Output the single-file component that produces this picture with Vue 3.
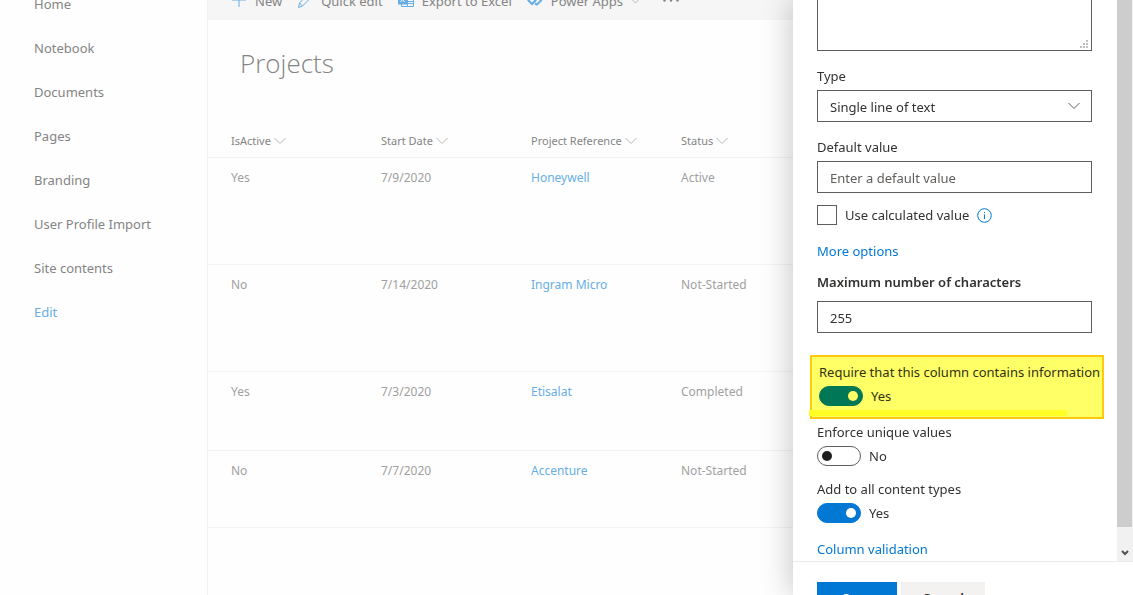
<script setup>
import { ref } from 'vue'

const navLinks = [
  'Home',
  'Notebook',
  'Documents',
  'Pages',
  'Branding',
  'User Profile Import',
  'Site contents'
]

const columns = ['IsActive', 'Start Date', 'Project Reference', 'Status']

const projects = [
  { active: 'Yes', start: '7/9/2020', reference: 'Honeywell', status: 'Active', size: 'tall' },
  { active: 'No', start: '7/14/2020', reference: 'Ingram Micro', status: 'Not-Started', size: 'tall' },
  { active: 'Yes', start: '7/3/2020', reference: 'Etisalat', status: 'Completed', size: 'medium' },
  { active: 'No', start: '7/7/2020', reference: 'Accenture', status: 'Not-Started', size: 'short' }
]

const description = ref('')
const defaultValue = ref('')
const calculated = ref(false)
const maxLength = ref('255')
const required = ref(true)
const unique = ref(false)
const allTypes = ref(true)
</script>

<template>
  <div class="page">
    <nav class="sidebar">
      <a v-for="link in navLinks" :key="link" href="#">{{ link }}</a>
      <a href="#" class="edit">Edit</a>
    </nav>

    <main class="content">
      <div class="command-bar">
        <button>
          <svg width="16" height="16" viewBox="0 0 16 16"><path d="M8 0v14M1 7h14" /></svg>
          New
        </button>
        <button>
          <svg width="16" height="16" viewBox="0 0 16 16">
            <path d="M1.5 14.5l1-4.5L11.5 1l3 3-9 9zM2.5 10l3 3M10 2.5l3 3" />
          </svg>
          Quick edit
        </button>
        <button>
          <svg width="16" height="16" viewBox="0 0 16 16">
            <path d="M8 1.5h7.5v12h-12V11M8 5h7.5M8 8.5h7.5M3.5 10.5h12M9.5 1.5v12" />
            <path class="solid" d="M0 2h9v9H0z" />
            <path class="cut" d="M2.5 4l4 5M6.5 4l-4 5" />
          </svg>
          Export to Excel
        </button>
        <button>
          <svg width="16" height="16" viewBox="0 0 16 16">
            <path class="thick" d="M1.5 7.5L5 4l3.5 3.5L5 11zM8 10.5l2 1 4-4L10.5 4 8 5.5" />
          </svg>
          Power Apps
          <svg class="chevron" width="9" height="9" viewBox="0 0 12 12"><path d="M1 3l5 5 5-5" /></svg>
        </button>
        <button class="more" aria-label="More">
          <svg width="16" height="16" viewBox="0 0 16 16">
            <circle cx="1.5" cy="7.5" r="1.2" /><circle cx="8" cy="7.5" r="1.2" /><circle cx="14.5" cy="7.5" r="1.2" />
          </svg>
        </button>
      </div>

      <h1>Projects</h1>

      <table>
        <thead>
          <tr>
            <th v-for="column in columns" :key="column">
              {{ column }}
              <svg class="chevron" width="12" height="12" viewBox="0 0 12 12"><path d="M0.5 3L6 8.5 11.5 3" /></svg>
            </th>
          </tr>
        </thead>
        <tbody>
          <tr v-for="project in projects" :key="project.reference" :class="project.size">
            <td>{{ project.active }}</td>
            <td>{{ project.start }}</td>
            <td><a href="#">{{ project.reference }}</a></td>
            <td>{{ project.status }}</td>
          </tr>
        </tbody>
      </table>
    </main>

    <aside class="panel">
      <div class="panel-body">
        <form class="fields" @submit.prevent>
          <div class="control description">
            <textarea v-model="description" aria-label="Description"></textarea>
            <svg class="grip" width="8" height="8" viewBox="0 0 8 8">
              <path d="M6 0h2v2H6zM3 3h2v2H3zM6 3h2v2H6zM0 6h2v2H0zM3 6h2v2H3zM6 6h2v2H6z" />
            </svg>
          </div>

          <label class="label" for="type">Type</label>
          <div class="control">
            <select id="type">
              <option>Single line of text</option>
            </select>
            <svg class="arrow" width="12" height="12" viewBox="0 0 12 12"><path d="M0.5 3L6 8.5 11.5 3" /></svg>
          </div>

          <label class="label" for="default">Default value</label>
          <input id="default" v-model="defaultValue" class="text-box" type="text" placeholder="Enter a default value">

          <div class="check-row">
            <input id="calculated" v-model="calculated" class="check" type="checkbox">
            <label for="calculated">Use calculated value</label>
            <svg class="info" width="15" height="15" viewBox="0 0 15 15">
              <circle cx="7.5" cy="7.5" r="6.8" /><path d="M7.5 6.5v4.5M7.5 4v1.2" />
            </svg>
          </div>

          <a href="#" class="more-options">More options</a>

          <label class="label strong" for="max">Maximum number of characters</label>
          <input id="max" v-model="maxLength" class="text-box" type="text">

          <div class="toggle-field highlight">
            <label for="required">Require that this column contains information</label>
            <div class="toggle-row">
              <input id="required" v-model="required" class="toggle green" type="checkbox" role="switch">
              <span>{{ required ? 'Yes' : 'No' }}</span>
            </div>
          </div>

          <div class="toggle-field">
            <label for="unique">Enforce unique values</label>
            <div class="toggle-row">
              <input id="unique" v-model="unique" class="toggle" type="checkbox" role="switch">
              <span>{{ unique ? 'Yes' : 'No' }}</span>
            </div>
          </div>

          <div class="toggle-field">
            <label for="all-types">Add to all content types</label>
            <div class="toggle-row">
              <input id="all-types" v-model="allTypes" class="toggle" type="checkbox" role="switch">
              <span>{{ allTypes ? 'Yes' : 'No' }}</span>
            </div>
          </div>

          <a href="#" class="validation">Column validation</a>
        </form>

        <div class="scrollbar">
          <div class="thumb"></div>
          <button class="scroll-down" aria-label="Scroll down">
            <svg width="8" height="8" viewBox="0 0 8 8"><path d="M1 2l3 3 3-3" /></svg>
          </button>
        </div>
      </div>

      <footer class="panel-footer">
        <button class="save-btn">Save</button>
        <button class="cancel-btn">Cancel</button>
      </footer>
    </aside>
  </div>
</template>

<style>
body {
  margin: 0;
  overflow: hidden;
}
</style>

<style scoped>
* {
  box-sizing: border-box;
}

.page {
  display: flex;
  height: 100vh;
  overflow: hidden;
  background: #fefefe;
  color: #323130;
  font-family: "Segoe UI", "Noto Sans", sans-serif;
  font-size: 13px;
  line-height: 20px;
}

a {
  color: #0078d4;
  text-decoration: none;
}

button,
input,
select,
textarea {
  margin: 0;
  font: inherit;
  color: inherit;
}

svg {
  flex: none;
  fill: none;
  stroke: currentColor;
}

/* left navigation, scrolled a little past its top */
.sidebar {
  flex: none;
  width: 208px;
  margin-top: -18px;
  padding-left: 34px;
  border-right: 1px solid #f1f1f1;
}

.sidebar a {
  display: block;
  line-height: 44px;
  color: #848484;
}

.sidebar a.edit {
  color: #66aee5;
}

.content {
  flex: 1;
  min-width: 0;
}

.command-bar {
  display: flex;
  align-items: center;
  gap: 15px;
  height: 38px;
  margin-top: -18px;
  padding-left: 23px;
  background: #f6f6f6;
}

.command-bar button {
  display: flex;
  align-items: center;
  gap: 8px;
  padding: 0;
  border: none;
  background: none;
  color: #848484;
  white-space: nowrap;
}

.command-bar svg {
  color: #66aee5;
}

.command-bar .solid {
  fill: #66aee5;
}

.command-bar .cut {
  stroke: #f6f6f6;
}

.command-bar .thick {
  stroke-width: 2;
}

.command-bar .chevron {
  color: #a6a6a6;
}

.command-bar .more {
  margin-left: 8px;
}

.command-bar .more svg {
  color: #848484;
  fill: currentColor;
  stroke: none;
}

h1 {
  margin: 23px 32px 0;
  color: #848484;
  font-family: "Segoe UI", "Open Sans", sans-serif;
  font-size: 26px;
  font-weight: 300;
  line-height: 40px;
}

table {
  width: 100%;
  margin-top: 41px;
  border-collapse: collapse;
  table-layout: fixed;
  font-size: 12px;
}

th,
td {
  width: 150px;
  padding: 10px 0 0 23px;
  border-bottom: 1px solid #f3f3f3;
  text-align: left;
  vertical-align: top;
  color: #a0a0a0;
}

th {
  height: 33px;
  padding-top: 7px;
  color: #848484;
  font-size: 11px;
  font-weight: 400;
}

th:last-child,
td:last-child {
  width: auto;
}

th .chevron {
  color: #b8b8b8;
  vertical-align: -2px;
}

td a {
  color: #66aee5;
}

.tall td {
  height: 107px;
}

.medium td {
  height: 79px;
}

.short td {
  height: 77px;
}

/* column settings panel */
.panel {
  position: fixed;
  top: 0;
  right: 0;
  bottom: 0;
  display: flex;
  flex-direction: column;
  width: 340px;
  background: white;
  box-shadow: 0 0 30px rgba(0, 0, 0, 0.25);
}

.panel-body {
  display: flex;
  flex: 1;
  min-height: 0;
  overflow: hidden;
}

.fields {
  display: flex;
  flex: 1;
  flex-direction: column;
  min-width: 0;
  padding: 0 25px 0 24px;
}

.control {
  position: relative;
}

.description {
  margin-top: -29px;
}

textarea {
  display: block;
  width: 100%;
  height: 80px;
  padding: 6px 12px;
  border: 1px solid #605e5c;
  resize: none;
}

.grip {
  position: absolute;
  right: 4px;
  bottom: 3px;
  fill: #bfbfbf;
  stroke: none;
}

.label {
  margin: 15px 0 4px;
}

.strong {
  margin: 11px 0 9px;
  font-weight: 600;
}

.text-box,
select {
  display: block;
  width: 100%;
  height: 32px;
  padding: 2px 12px 0;
  border: 1px solid #605e5c;
  border-radius: 0;
  background: white;
  appearance: none;
}

.text-box::placeholder {
  color: #605e5c;
  opacity: 1;
}

.arrow {
  position: absolute;
  top: 10px;
  right: 12px;
  color: #605e5c;
  pointer-events: none;
}

.check-row {
  display: flex;
  align-items: center;
  gap: 8px;
  margin-top: 12px;
}

.check {
  width: 20px;
  height: 20px;
  border: 1px solid #605e5c;
  background: white;
  appearance: none;
}

.check:checked {
  background: #0078d4;
}

.info {
  color: #0078d4;
}

.more-options {
  margin-top: 16px;
}

.toggle-field {
  margin-bottom: 13px;
}

.toggle-field label {
  display: block;
  margin-bottom: 4px;
  white-space: nowrap;
}

.toggle-row {
  display: flex;
  align-items: center;
  gap: 8px;
}

/* marked area reaches out past both edges of the fields */
.highlight {
  position: relative;
  height: 64px;
  margin: 22px -12px 3px -7px;
  padding: 5px 7px;
  border: 2px solid #ffc90e;
  background: #ffff66;
  color: #323114;
}

.highlight::after {
  content: "";
  position: absolute;
  bottom: 1px;
  left: -3px;
  width: 89%;
  height: 6px;
  background: #ffff26;
}

.toggle {
  display: flex;
  align-items: center;
  width: 44px;
  height: 20px;
  padding: 0 4px;
  border: 1px solid #605e5c;
  border-radius: 10px;
  background: white;
  appearance: none;
}

.toggle::before {
  content: "";
  width: 10px;
  height: 10px;
  border-radius: 50%;
  background: #201f1e;
}

.toggle:checked {
  justify-content: flex-end;
  border-color: #0078d4;
  background: #0078d4;
}

.toggle:checked::before {
  background: white;
}

.toggle.green:checked {
  border-color: #007855;
  background: #007855;
}

.toggle.green:checked::before {
  background: #ffff66;
}

.validation {
  margin-top: 3px;
}

.scrollbar {
  display: flex;
  flex: none;
  flex-direction: column;
  width: 16px;
  background: #f1f1f1;
}

.thumb {
  flex: 1;
  margin-right: 1px;
  background: #cdcdcd;
}

.scroll-down {
  display: flex;
  align-items: flex-end;
  justify-content: center;
  height: 34px;
  padding: 0 0 4px;
  border: none;
  background: none;
  color: #505050;
}

.scroll-down svg {
  stroke-width: 2;
}

.panel-footer {
  display: flex;
  flex: none;
  gap: 4px;
  height: 34px;
  padding: 20px 24px 0;
  border-top: 1px solid #edebe9;
}

.panel-footer button {
  flex: none;
  height: 32px;
  padding: 0 20px;
  border: none;
  font-weight: 600;
}

.save-btn {
  min-width: 80px;
  background: #0078d4;
  color: white;
}

.cancel-btn {
  min-width: 84px;
  background: #f3f2f1;
}
</style>
